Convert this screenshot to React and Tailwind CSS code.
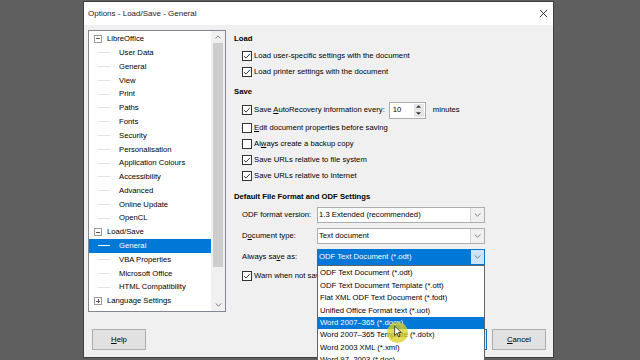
import React from 'react';

const tree = [
  { label: 'LibreOffice', level: 0, box: 'minus' },
  { label: 'User Data', level: 1 },
  { label: 'General', level: 1 },
  { label: 'View', level: 1 },
  { label: 'Print', level: 1 },
  { label: 'Paths', level: 1 },
  { label: 'Fonts', level: 1 },
  { label: 'Security', level: 1 },
  { label: 'Personalisation', level: 1 },
  { label: 'Application Colours', level: 1 },
  { label: 'Accessibility', level: 1 },
  { label: 'Advanced', level: 1 },
  { label: 'Online Update', level: 1 },
  { label: 'OpenCL', level: 1 },
  { label: 'Load/Save', level: 0, box: 'minus' },
  { label: 'General', level: 1, selected: true },
  { label: 'VBA Properties', level: 1 },
  { label: 'Microsoft Office', level: 1 },
  { label: 'HTML Compatibility', level: 1 },
  { label: 'Language Settings', level: 0, box: 'plus' },
  { label: 'LibreOffice Base', level: 0, box: 'plus' },
];

const formats = [
  'ODF Text Document (*.odt)',
  'ODF Text Document Template (*.ott)',
  'Flat XML ODF Text Document (*.fodt)',
  'Unified Office Format text (*.uot)',
  'Word 2007–365 (*.docx)',
  'Word 2007–365 Template (*.dotx)',
  'Word 2003 XML (*.xml)',
  'Word 97–2003 (*.doc)',
];

const ExpandBox = ({ type }) => (
  <span className="w-[8px] h-[8px] border border-[#9a9a9a] bg-white flex items-center justify-center relative shrink-0">
    <span className="absolute w-[4px] h-px bg-[#555]" />
    {type === 'plus' && <span className="absolute h-[4px] w-px bg-[#555]" />}
  </span>
);

const Check = ({ on }) => (
  <span className="w-[10px] h-[10px] border border-[#333] bg-white flex items-center justify-center shrink-0">
    {on && (
      <svg viewBox="0 0 10 10" className="w-[8px] h-[8px]">
        <path d="M1.3 5.2 L3.9 7.6 L8.7 2.2" fill="none" stroke="#222" strokeWidth="1.1" />
      </svg>
    )}
  </span>
);

const Chevron = ({ color = '#606060' }) => (
  <svg viewBox="0 0 8 5" className="w-[7px] h-[4px]">
    <path d="M0.5 0.5 L4 4 L7.5 0.5" fill="none" stroke={color} strokeWidth="1" />
  </svg>
);

const CheckRow = ({ on, children }) => (
  <div className="h-[16px] flex items-center gap-[2px] pl-[8px]">
    <Check on={on} />
    <span>{children}</span>
  </div>
);

const Combo = ({ value, active, children }) => (
  <div className="relative w-[168px] h-[16px]">
    <div
      className={`h-full flex items-center border ${
        active ? 'border-[#0078d7] bg-white' : 'border-[#adadad] bg-white'
      }`}
    >
      <div className={`flex-1 h-full flex items-center pl-[1px] ${active ? 'bg-[#0078d7] text-white' : ''}`}>
        {value}
      </div>
      <div
        className={`w-[14px] h-full flex items-center justify-center border-l ${
          active ? 'bg-[#cce4f7] border-[#0078d7]' : 'bg-[#f0f0f0] border-[#d4d4d4]'
        }`}
      >
        <Chevron />
      </div>
    </div>
    {children}
  </div>
);

const Button = ({ children, def }) => (
  <div
    className={`w-[54px] h-[21px] flex items-center justify-center bg-[#e1e1e1] border ${
      def ? 'border-[#0078d7]' : 'border-[#adadad]'
    }`}
  >
    {children}
  </div>
);

export default function App() {
  return (
    <div className="relative w-[640px] h-[360px] overflow-hidden bg-[#5f5f5f] pl-[83px] pt-[1px] font-['Liberation_Sans',Arial,sans-serif] text-[7.7px] text-[#000]">
      <div className="w-[471px] h-[357px] border border-[#3f3f3f] flex flex-col">
        {/* title bar */}
        <div className="h-[23px] bg-white flex items-center justify-between pl-[4px] pr-[5px]">
          <span className="text-[8px] text-[#222]">Options - Load/Save - General</span>
          <svg viewBox="0 0 10 10" className="w-[9px] h-[9px]">
            <path d="M1 1 L9 9 M9 1 L1 9" stroke="#222" strokeWidth="1" />
          </svg>
        </div>

        <div className="flex-1 bg-[#f0f0f0] flex flex-col">
          <div className="flex pl-[4px] pt-[5px]">
            {/* tree */}
            <div className="w-[138px] h-[282px] border border-[#828790] bg-white flex">
              <div className="flex-1 overflow-hidden pt-[1px]">
                {tree.map((t, i) => (
                  <div
                    key={i}
                    className={`h-[13.8px] flex items-center relative ${
                      t.selected ? 'bg-[#0078d7] text-white' : ''
                    }`}
                  >
                    {t.level === 0 ? (
                      <div className="flex items-center pl-[5px] gap-[5px]">
                        <ExpandBox type={t.box} />
                        <span>{t.label}</span>
                      </div>
                    ) : (
                      <div className="flex items-center pl-[9px]">
                        <span
                          className={`w-[12px] h-px mr-[9px] ${t.selected ? 'bg-white' : 'bg-[#e2e2e2]'}`}
                        />
                        <span>{t.label}</span>
                      </div>
                    )}
                  </div>
                ))}
              </div>
              {/* scrollbar */}
              <div className="w-[14px] bg-[#f0f0f0] flex flex-col items-center">
                <div className="h-[10px] flex items-center justify-center pt-[2px]">
                  <svg viewBox="0 0 8 5" className="w-[6px] h-[4px]">
                    <path d="M0.5 4.5 L4 1 L7.5 4.5" fill="none" stroke="#606060" strokeWidth="1" />
                  </svg>
                </div>
                <div className="w-[10px] h-[224px] mt-[2px] bg-[#cdcdcd]" />
                <div className="flex-1" />
                <div className="h-[10px] flex items-center justify-center pb-[2px]">
                  <Chevron />
                </div>
              </div>
            </div>

            {/* right content */}
            <div className="ml-[8px] flex-1 flex flex-col pt-[2px]">
              <div className="h-[14px] flex items-center font-bold">Load</div>
              <div className="mt-[2px]">
                <CheckRow on>Load user-specific settings with the document</CheckRow>
                <CheckRow on>Load printer settings with the document</CheckRow>
              </div>
              <div className="h-[14px] mt-[5px] flex items-center font-bold">Save</div>
              <div className="mt-[2px] h-[18px] flex items-center gap-[2px] pl-[8px]">
                <Check on />
                <span>
                  Save <span className="underline">A</span>utoRecovery information every:
                </span>
                <div className="ml-[2px] w-[37px] h-[17px] bg-white border border-[#adadad] flex items-center">
                  <span className="flex-1 pl-[3px]">10</span>
                  <div className="w-[10px] h-[13px] mr-[1px] bg-[#e6e6e6] flex flex-col items-center justify-around">
                    <svg viewBox="0 0 6 3" className="w-[5px] h-[3px]">
                      <path d="M0 3 L3 0 L6 3 Z" fill="#333" />
                    </svg>
                    <svg viewBox="0 0 6 3" className="w-[5px] h-[3px]">
                      <path d="M0 0 L3 3 L6 0 Z" fill="#333" />
                    </svg>
                  </div>
                </div>
                <span className="ml-[5px]">minutes</span>
              </div>
              <div className="mt-px">
                <CheckRow>
                  <span className="underline">E</span>dit document properties before saving
                </CheckRow>
                <CheckRow>
                  Al<span className="underline">w</span>ays create a backup copy
                </CheckRow>
                <CheckRow on>Save URLs relative to file system</CheckRow>
                <CheckRow on>Save URLs relative to Internet</CheckRow>
              </div>
              <div className="h-[14px] mt-[6px] flex items-center font-bold">
                Default File Format and ODF Settings
              </div>
              <div className="mt-[3px] flex flex-col gap-[5px] pl-[8px]">
                <div className="flex items-center">
                  <span className="w-[75px]">ODF format version:</span>
                  <Combo value="1.3 Extended (recommended)" />
                </div>
                <div className="flex items-center">
                  <span className="w-[75px]">
                    D<span className="underline">o</span>cument type:
                  </span>
                  <Combo value="Text document" />
                </div>
                <div className="flex items-center relative z-10">
                  <span className="w-[75px]">
                    Always sa<span className="underline">v</span>e as:
                  </span>
                  <Combo value="ODF Text Document (*.odt)" active>
                    <div className="absolute top-full left-0 w-[168px] bg-white border border-[#646464] pt-px">
                      {formats.map((f, i) => (
                        <div
                          key={i}
                          className={`h-[12.4px] flex items-center pl-[2px] whitespace-nowrap ${
                            i === 4 ? 'bg-[#0078d7] text-white' : ''
                          }`}
                        >
                          {f}
                        </div>
                      ))}
                    </div>
                  </Combo>
                </div>
              </div>
              <div className="mt-[3px]">
                <CheckRow on>Warn when not saving in ODF or default format</CheckRow>
              </div>
            </div>
          </div>

          {/* buttons */}
          <div className="mt-[17px] flex items-center pl-[8px] pr-[7px]">
            <Button>
              <span>
                <span className="underline">H</span>elp
              </span>
            </Button>
            <div className="flex-1" />
            <Button def>OK</Button>
            <div className="w-[5px]" />
            <Button>
              <span>
                <span className="underline">C</span>ancel
              </span>
            </Button>
          </div>
        </div>
      </div>

      {/* pointer highlight */}
      <div className="absolute left-[387px] top-[322px] w-[21px] h-[21px] rounded-full bg-[#d8d020]/75 z-20" />
      <svg viewBox="0 0 12 18" className="absolute left-[394px] top-[325px] w-[8px] h-[13px] z-30">
        <path d="M1 1 L1 15 L4.5 11.5 L7 17 L9 16 L6.5 10.5 L11 10.5 Z" fill="white" stroke="black" strokeWidth="1" />
      </svg>
    </div>
  );
}
